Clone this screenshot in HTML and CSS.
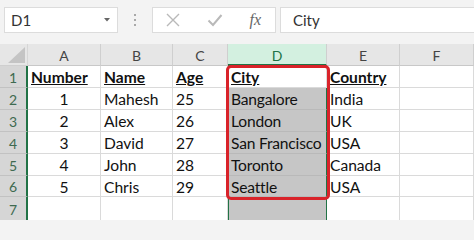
FILE: index.html
```html
<!DOCTYPE html>
<html>
<head>
<meta charset="utf-8">
<link rel="stylesheet" href="styles.css">
</head>
<body>
<div class="app">
  <div class="toolbar">
    <div class="namebox">
      <span class="ref">D1</span>
      <svg class="caret" width="6" height="4" viewBox="0 0 6 4"><path d="M0 0H6L3 3.5Z" fill="#666"/></svg>
    </div>
    <div class="grip"><i></i><i></i><i></i></div>
    <div class="fxbox">
      <svg class="ico" width="14" height="14" viewBox="0 0 14 14"><path d="M1 1L13 13M13 1L1 13" stroke="#b9b9b9" stroke-width="1.4" fill="none"/></svg>
      <svg class="ico" width="16" height="14" viewBox="0 0 16 14"><path d="M1.5 7.5L6 12L14.5 2" stroke="#b9b9b9" stroke-width="2" fill="none"/></svg>
      <span class="fx">fx</span>
    </div>
    <div class="formula">City</div>
  </div>
  <div class="sheet">
    <div class="grid">
      <div class="corner"><svg width="17" height="16" viewBox="0 0 17 16"><path d="M17 0V16H0Z" fill="#c4c4c4"/></svg></div>
      <div class="ch">A</div>
      <div class="ch">B</div>
      <div class="ch">C</div>
      <div class="ch sel">D</div>
      <div class="ch">E</div>
      <div class="ch">F</div>

      <div class="rh">1</div>
      <div class="c hd">Number</div>
      <div class="c hd">Name</div>
      <div class="c hd">Age</div>
      <div class="c hd dact">City</div>
      <div class="c hd">Country</div>
      <div class="c"></div>

      <div class="rh">2</div>
      <div class="c ctr">1</div>
      <div class="c">Mahesh</div>
      <div class="c">25</div>
      <div class="c dsel">Bangalore</div>
      <div class="c">India</div>
      <div class="c"></div>

      <div class="rh">3</div>
      <div class="c ctr">2</div>
      <div class="c">Alex</div>
      <div class="c">26</div>
      <div class="c dsel">London</div>
      <div class="c">UK</div>
      <div class="c"></div>

      <div class="rh">4</div>
      <div class="c ctr">3</div>
      <div class="c">David</div>
      <div class="c">27</div>
      <div class="c dsel">San Francisco</div>
      <div class="c">USA</div>
      <div class="c"></div>

      <div class="rh">5</div>
      <div class="c ctr">4</div>
      <div class="c">John</div>
      <div class="c">28</div>
      <div class="c dsel">Toronto</div>
      <div class="c">Canada</div>
      <div class="c"></div>

      <div class="rh">6</div>
      <div class="c ctr">5</div>
      <div class="c">Chris</div>
      <div class="c">29</div>
      <div class="c dsel">Seattle</div>
      <div class="c">USA</div>
      <div class="c"></div>

      <div class="rh last">7</div>
      <div class="c last"></div>
      <div class="c last"></div>
      <div class="c last"></div>
      <div class="c dsel last"></div>
      <div class="c last"></div>
      <div class="c last"></div>
    </div>
    <div class="highlight"></div>
  </div>
</div>
</body>
</html>
```
FILE: styles.css
```css
html, body {
  margin: 0;
  padding: 0;
}
body {
  background: #f3f3f3;
  font-family: Lato, "Liberation Sans", sans-serif;
  width: 474px;
  height: 220px;
  overflow: hidden;
}
.app {
  width: 474px;
  height: 220px;
  display: flex;
  flex-direction: column;
}
.toolbar {
  height: 44px;
  flex: none;
  box-sizing: border-box;
  padding: 7px 0 11px 4px;
  display: flex;
  background: #f3f3f3;
}
.namebox {
  width: 114px;
  box-sizing: border-box;
  background: #fff;
  border: 1px solid #dcdcdc;
  display: flex;
  align-items: center;
  justify-content: space-between;
  padding: 0 7px 0 6px;
}
.ref {
  font-size: 15px;
  color: #333;
}
.grip {
  width: 34px;
  display: flex;
  flex-direction: column;
  align-items: center;
  justify-content: center;
  gap: 3px;
}
.grip i {
  width: 2px;
  height: 2px;
  background: #a8a8a8;
  display: block;
}
.fxbox {
  width: 124px;
  box-sizing: border-box;
  background: #fff;
  border: 1px solid #dcdcdc;
  display: flex;
  align-items: center;
  padding: 0 14px 0 13px;
  justify-content: space-between;
}
.fx {
  font-family: "Liberation Serif", serif;
  font-style: italic;
  font-size: 16px;
  color: #666;
  padding-bottom: 1px;
}
.formula {
  flex: 1;
  margin-left: 4px;
  background: #fff;
  border: 1px solid #dcdcdc;
  border-right: none;
  display: flex;
  align-items: center;
  padding-left: 12px;
  font-size: 15px;
  color: #333;
}
.sheet {
  position: relative;
  flex: 1;
  background: #fff;
}
.grid {
  display: grid;
  grid-template-columns: 28px 73px 72px 55px 99px 73px 74px;
  grid-template-rows: 22px 22px 22px 22px 22px 22px 21px 23px;
}
.corner {
  background: #e6e6e6;
  border-right: 1px solid #d6d6d6;
  border-bottom: 1px solid #cfcfcf;
  display: flex;
  align-items: flex-end;
  justify-content: flex-end;
  padding: 0 2px 2px 0;
}
.corner svg { display: block; }
.ch {
  background: #e6e6e6;
  border-right: 1px solid #cfcfcf;
  border-bottom: 1px solid #c8c8c8;
  font-size: 14px;
  color: #444;
  display: flex;
  align-items: center;
  justify-content: center;
  padding-top: 2px;
}
.ch.sel {
  background: #d3f0e0;
  color: #217346;
  border-bottom: 2px solid #217346;
}
.rh {
  background: #d6d6d6;
  border-right: 2px solid #217346;
  border-bottom: 1px solid #c2c2c2;
  font-size: 14px;
  color: #3e6a50;
  display: flex;
  align-items: center;
  justify-content: center;
  padding-top: 1px;
}
.c {
  border-right: 1px solid #dadada;
  border-bottom: 1px solid #dadada;
  font-size: 15.6px;
  color: #111;
  display: flex;
  align-items: center;
  padding: 1px 0 0 3px;
  white-space: nowrap;
  overflow: hidden;
  box-sizing: border-box;
}
.c.hd {
  font-weight: bold;
  text-decoration: underline;
}
.c.ctr {
  justify-content: center;
  padding-left: 0;
}
.c.dact {
  background: #fff;
}
.c.dsel {
  background: #c6c6c6;
  border-bottom: 1px solid #b9b9b9;
  border-right: 1px solid #217346;
  border-left: 1px solid #217346;
  padding-left: 2px;
  letter-spacing: -0.2px;
}
.last,
.c.dsel.last {
  border-bottom: none;
}
.highlight {
  position: absolute;
  left: 226px;
  top: 21px;
  width: 104px;
  height: 135px;
  box-sizing: border-box;
  border: 3px solid #d9232a;
  border-radius: 5px;
}
```
